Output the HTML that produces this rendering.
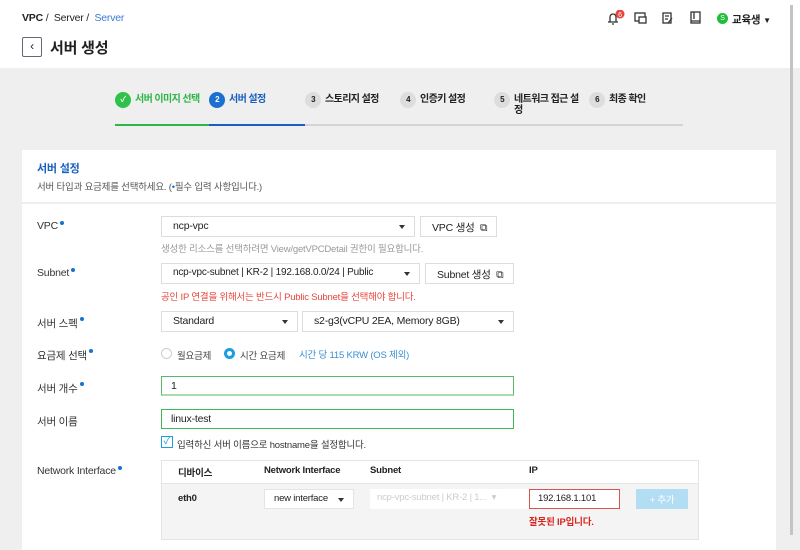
<!DOCTYPE html>
<html><head><meta charset="utf-8"><style>
*{box-sizing:border-box;margin:0;padding:0}
body{width:800px;height:535px;overflow:hidden;background:#efefef;font-family:"Liberation Sans","Noto Sans CJK KR",sans-serif;font-size:12px;color:#222;position:relative;letter-spacing:-0.2px}
.a{position:absolute;white-space:nowrap}
.hdr{position:absolute;left:0;top:0;width:800px;height:68px;background:#fff}
.sel{position:absolute;background:#fff;border:1px solid #ddd;height:21px;font-size:10.5px;padding:3px 0 0 11px;color:#222;white-space:nowrap;overflow:hidden}
.sel:after{content:"";position:absolute;right:9px;top:8px;border-left:3.5px solid transparent;border-right:3.5px solid transparent;border-top:4px solid #333}
.btn{position:absolute;background:#fff;border:1px solid #ddd;height:21px;font-size:10.5px;padding:3px 0 0 11px;white-space:nowrap}
.lab{position:absolute;left:37px;font-size:10.5px;color:#333}
.lab i{display:inline-block;width:4px;height:4px;border-radius:50%;background:#1a6fd1;vertical-align:top;margin:1px 0 0 2px}
.num{position:absolute;left:0;top:0;width:16px;height:16px;border-radius:50%;background:#ddd;font-size:8px;text-align:center;line-height:16px;font-weight:bold}
.st{position:absolute;top:92px;font-size:10px;font-weight:bold;letter-spacing:-0.6px;padding-left:20px;height:16px;line-height:16px}
.st span.t{display:block;width:68px;white-space:normal;line-height:11px;padding-top:2px}
</style></head><body>
<div class="hdr"></div>
<div class="a" style="left:22px;top:12px;font-size:10.5px"><b>VPC</b> / &nbsp;Server / &nbsp;<span style="color:#3a7bd5">Server</span></div>
<div class="a" style="left:22px;top:37px;width:20px;height:20px;border:1px solid #667;border-radius:2px;font-size:12px;text-align:center;line-height:17px">&lsaquo;</div>
<div class="a" style="left:50px;top:37px;font-size:15px;font-weight:bold">서버 생성</div>
<svg class="a" style="left:604px;top:10px" width="100" height="16"><path d="M4 12h10M6 12V7a3 3 0 016 0v5M8 14h2" stroke="#333" fill="none" stroke-width="1.3"/><circle cx="16" cy="4" r="4.5" fill="#e8453c"/><text x="16" y="7" font-size="7" fill="#fff" text-anchor="middle" font-family="Liberation Sans">6</text><rect x="31" y="3" width="10" height="8" stroke="#333" fill="none" stroke-width="1.3"/><rect x="35" y="7" width="7" height="6" stroke="#333" fill="#fff" stroke-width="1.3"/><rect x="59" y="3" width="8" height="10" stroke="#333" fill="none" stroke-width="1.3"/><path d="M61 6h4M61 9h3M64 13l4-5" stroke="#333" stroke-width="1.2"/><rect x="87" y="2" width="9" height="11" stroke="#333" fill="none" stroke-width="1.3"/><path d="M90 2v7M87 11h9" stroke="#333" stroke-width="1.3"/></svg>
<div class="a" style="left:717px;top:13px;width:11px;height:11px;border-radius:50%;background:#1fbe3a;color:#fff;font-size:7px;text-align:center;line-height:11px">S</div>
<div class="a" style="left:732px;top:12px;font-size:10.5px;font-weight:bold">교육생 <span style="font-size:8px">▼</span></div>
<div class="a" style="left:790px;top:5px;width:3px;height:530px;background:#c4c4c4"></div>

<div class="st" style="left:115px;color:#2fb54a"><span class="num" style="background:#2fc24a;color:#fff">✓</span>서버 이미지 선택</div>
<div class="st" style="left:209px;color:#1a5fbf"><span class="num" style="background:#1a6fd1;color:#fff">2</span>서버 설정</div>
<div class="st" style="left:305px"><span class="num">3</span>스토리지 설정</div>
<div class="st" style="left:400px"><span class="num">4</span>인증키 설정</div>
<div class="st" style="left:494px"><span class="num">5</span><span class="t">네트워크 접근 설 정</span></div>
<div class="st" style="left:589px"><span class="num">6</span>최종 확인</div>
<div class="a" style="left:115px;top:124px;width:94px;height:2px;background:#2fb54a"></div>
<div class="a" style="left:209px;top:124px;width:96px;height:2px;background:#1a5fbf"></div>
<div class="a" style="left:305px;top:124px;width:378px;height:2px;background:#d4d4d4"></div>

<div class="a" style="left:22px;top:150px;width:754px;height:400px;background:#fff"></div>
<div class="a" style="left:22px;top:202px;width:754px;height:2px;background:#eee"></div>
<div class="a" style="left:37px;top:160px;font-size:11px;font-weight:bold;color:#1a5fbf">서버 설정</div>
<div class="a" style="left:37px;top:179px;font-size:9.5px;color:#555">서버 타입과 요금제를 선택하세요. (<span style="color:#1a6fd1">•</span>필수 입력 사항입니다.)</div>

<div class="lab" style="top:220px">VPC<i></i></div>
<div class="sel" style="left:161px;top:216px;width:254px">ncp-vpc</div>
<div class="btn" style="left:420px;top:216px;width:77px">VPC 생성 &nbsp;⧉</div>
<div class="a" style="left:161px;top:241px;font-size:9.5px;color:#999">생성한 리소스를 선택하려면 View/getVPCDetail 권한이 필요합니다.</div>

<div class="lab" style="top:267px">Subnet<i></i></div>
<div class="sel" style="left:161px;top:263px;width:259px;font-size:10px">ncp-vpc-subnet | KR-2 | 192.168.0.0/24 | Public</div>
<div class="btn" style="left:425px;top:263px;width:89px">Subnet 생성 &nbsp;⧉</div>
<div class="a" style="left:161px;top:289px;font-size:9.5px;color:#e8453c">공인 IP 연결을 위해서는 반드시 Public Subnet을 선택해야 합니다.</div>

<div class="lab" style="top:316px">서버 스펙<i></i></div>
<div class="sel" style="left:161px;top:311px;width:137px">Standard</div>
<div class="sel" style="left:302px;top:311px;width:212px">s2-g3(vCPU 2EA, Memory 8GB)</div>

<div class="lab" style="top:348px">요금제 선택<i></i></div>
<div class="a" style="left:161px;top:348px;width:11px;height:11px;border:1px solid #ccc;border-radius:50%"></div>
<div class="a" style="left:177px;top:348px;font-size:9.5px;color:#444">월요금제</div>
<div class="a" style="left:224px;top:348px;width:11px;height:11px;border:3px solid #1a9fe0;border-radius:50%"></div>
<div class="a" style="left:240px;top:348px;font-size:9.5px;color:#444">시간 요금제</div>
<div class="a" style="left:299px;top:347px;font-size:9.5px;color:#3a8fd0">시간 당 115 KRW (OS 제외)</div>

<div class="lab" style="top:381px">서버 개수<i></i></div>
<div class="a" style="left:161px;top:376px;width:353px;height:20px;border:1px solid #5bb86a;border-bottom:2px solid #a8dbb0;padding:3px 0 0 9px;font-size:10.5px">1</div>
<div class="lab" style="top:414px">서버 이름</div>
<div class="a" style="left:161px;top:409px;width:353px;height:20px;border:1px solid #3fb858;padding:3px 0 0 9px;font-size:10.5px">linux-test</div>
<div class="a" style="left:161px;top:436px;width:12px;height:12px;border:1px solid #1a9fe0;color:#1a9fe0;font-size:10px;line-height:10px;text-align:center">✓</div>
<div class="a" style="left:177px;top:437px;font-size:9.5px;color:#333">입력하신 서버 이름으로 hostname을 설정합니다.</div>

<div class="lab" style="top:465px">Network Interface<i></i></div>
<div class="a" style="left:161px;top:460px;width:538px;height:80px;border:1px solid #e4e4e4;background:#f4f4f4"></div>
<div class="a" style="left:162px;top:461px;width:536px;height:23px;background:#fff;border-bottom:1px solid #e4e4e4"></div>
<div class="a" style="left:178px;top:465px;font-size:9.5px;font-weight:bold">디바이스</div>
<div class="a" style="left:264px;top:465px;font-size:9.5px;font-weight:bold">Network Interface</div>
<div class="a" style="left:370px;top:465px;font-size:9.5px;font-weight:bold">Subnet</div>
<div class="a" style="left:529px;top:465px;font-size:9.5px;font-weight:bold">IP</div>
<div class="a" style="left:178px;top:493px;font-size:9.5px;font-weight:bold">eth0</div>
<div class="sel" style="left:264px;top:489px;width:90px;height:20px;font-size:9.5px;padding-left:9px;border-color:#e4e4e4">new interface</div>
<div class="a" style="left:370px;top:489px;width:161px;height:20px;background:#fff;font-size:9.5px;color:#ccc;padding:3px 0 0 7px">ncp-vpc-subnet | KR-2 | 1... &nbsp;▾</div>
<div class="a" style="left:529px;top:489px;width:91px;height:20px;background:#fff;border:1px solid #d9534f;font-size:9.5px;padding:3px 0 0 8px">192.168.1.101</div>
<div class="a" style="left:636px;top:489px;width:52px;height:20px;background:#b3ddf2;color:#fff;font-size:9.5px;text-align:center;padding-top:3px">+ 추가</div>
<div class="a" style="left:529px;top:514px;font-size:9.5px;color:#d9241c;font-weight:bold">잘못된 IP입니다.</div>
</body></html>
